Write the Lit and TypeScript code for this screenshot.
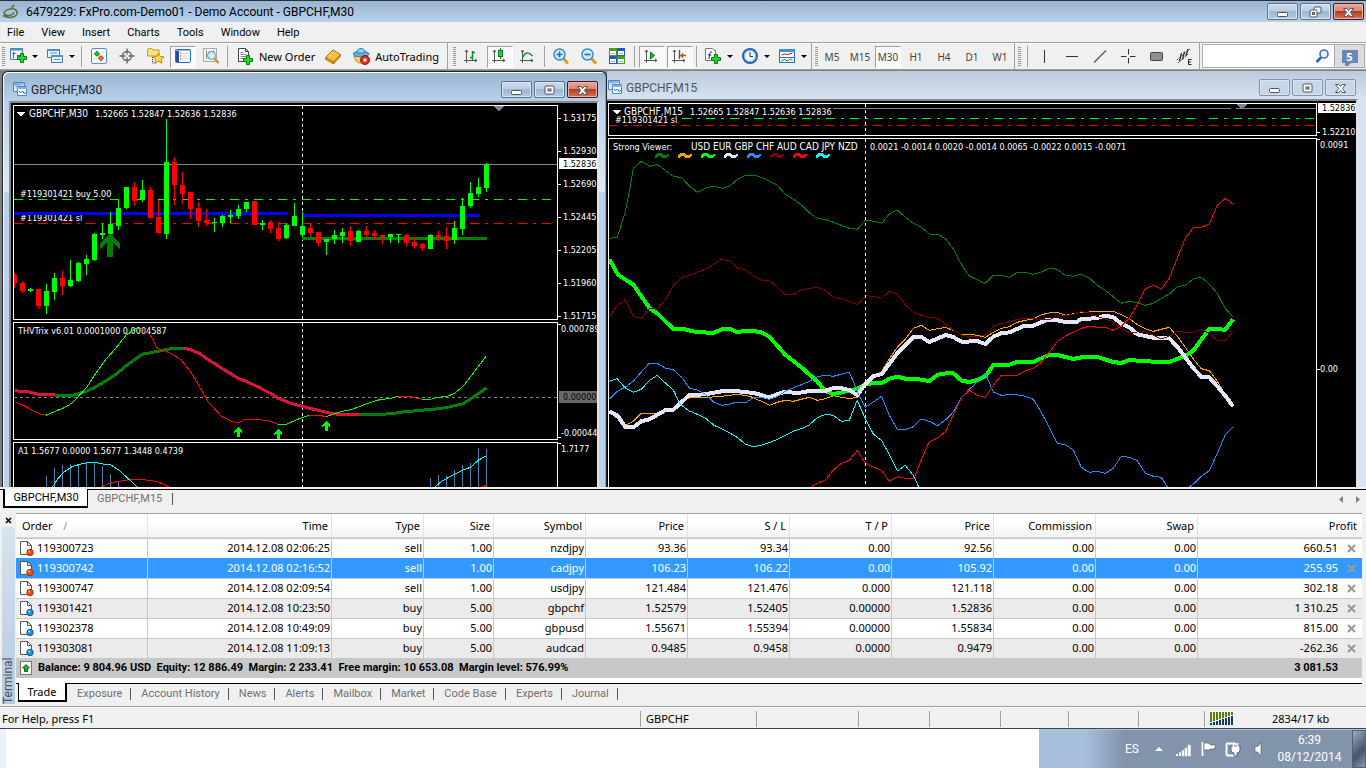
import { LitElement, html, css, svg } from "lit";
import { customElement, property } from "lit/decorators.js";
import { classMap } from "lit/directives/class-map.js";

/* ---------- icons ---------- */

const plus = (x: number, y: number) => svg`
  <path d="M${x + 3.5} ${y + 0.5}h3v3h3v3h-3v3h-3v-3h-3v-3h3z" fill="#19e01f" stroke="#047a10"/>`;

const icons: Record<string, unknown> = {
  logo: svg`<path d="M1 12.500q5 3 10 1.500t4-5.500q-2-3.500-7-2.500t-6 4q1 3 5 2.500t5-3" fill="none" stroke="#5f7040" stroke-width="1.600"/><path d="M9 5q0-3 4-3.500-.5 3-4 3.500z" fill="#5f7040"/>`,
  chart: svg`<path d="M1.500 1.500h11v4M1.500 1.500v9h4" fill="#dfeefb" stroke="#4a86c8"/><path d="M1 3h11" stroke="#4a86c8"/><path d="M5.500 5.500h9v9h-9z" fill="#fff" stroke="#4a86c8"/><path d="M5 7h10" stroke="#7fb2e5" stroke-width="2"/><path d="M7 10l1.500 2 2-2 2 3 1-2" fill="none" stroke="#2f6fb7"/>`,
  newchart: svg`<path d="M.5.500h12v11H.500z" fill="#eef6fd" stroke="#4480ba"/><path d="M0 1.500h13" stroke="#4a90d8" stroke-width="2"/><path d="M3.500 4v6M2.500 5.500h3M7 7.500h4" stroke="#557"/>${plus(7, 5)}`,
  profiles: svg`<path d="M.5 1.500h12v8H.500z" fill="#e6f2fc" stroke="#3f78ae"/><path d="M0 2h13" stroke="#4a90d8" stroke-width="2"/><path d="M4.500 7.500h11v7h-11z" fill="#e6f2fc" stroke="#3f78ae"/><path d="M4 8h12" stroke="#4a90d8" stroke-width="2"/><path d="M3 5h7M7 11.500h6" stroke="#6a90b5"/>`,
  market: svg`<rect x=".5" y=".5" width="15" height="15" rx="1.500" fill="#fff" stroke="#4a90d8"/><path d="M6 3l3 3.200H7.200V8H4.800V6.200H3z" fill="#1fbf2f" stroke="#067a12" stroke-width=".7"/><path d="M10 13l3-3.200h-1.800V8H8.800v1.800H7z" fill="#ff6a3a" stroke="#c02a05" stroke-width=".7"/><path d="M10 4h3M3 11h3" stroke="#bcd"/>`,
  cross: svg`<circle cx="8" cy="8" r="4.500" fill="none" stroke="#666" stroke-width="1.400"/><path d="M8 .5v6M8 9.500v6M.5 8h6M9.500 8h6" stroke="#666" stroke-width="1.400"/>`,
  folder: svg`<path d="M.5 2.500q0-2 2-2h2l1.500 1.500h6v6h-11.500z" fill="#fbe27a" stroke="#c79b1e"/><path d="M5.500 9v6h3" stroke="#333" stroke-dasharray="1 1" fill="none"/><path d="M11.500 5l1.700 3.500 3.800.4-2.900 2.500.9 3.800-3.500-2-3.500 2 .9-3.800-2.900-2.500 3.800-.4z" fill="#ffdc4a" stroke="#b98a10"/>`,
  navigator: svg`<rect x=".5" y="1.500" width="15" height="13" rx="1" fill="#fff" stroke="#2e6fb3"/><path d="M2.500 3v11" stroke="#1e4fa0" stroke-width="3"/><path d="M.5 2h15" stroke="#2e6fb3"/><path d="M6 5.500h8M6 8h8M6 10.500h8" stroke="#cdd9ea"/><path d="M5 5h1M5 8h1M5 11h1" stroke="#d33"/>`,
  tester: svg`<rect x=".5" y=".5" width="13" height="13" fill="#f6f6f6" stroke="#a9a9a9"/><path d="M3.500 2v9M6.500 3v8M10.500 2v3" stroke="#888"/><circle cx="8.500" cy="7.500" r="4" fill="#d5ecfa" fill-opacity=".85" stroke="#5b93c4"/><path d="M11.500 10.500l4 4.500" stroke="#c9962c" stroke-width="2.400"/>`,
  order: svg`<path d="M1.500.5h7l3 3v10h-10z" fill="#fff" stroke="#444"/><path d="M8.500.5v3h3" fill="none" stroke="#444"/><path d="M3.500 4.500h3M3.500 6.500h6M3.500 8.500h6M3.500 10.500h4" stroke="#888"/>${plus(6, 7)}`,
  book: svg`<path d="M.5 9.500L8 2l7.500 4.500-7 7.500z" fill="#f5bf3c" stroke="#a9720c"/><path d="M.5 9.500v2l8 4.500v-2zM8.500 16l7-7.500v-2l-7 7.500z" fill="#d89820" stroke="#a9720c" stroke-width=".7"/><path d="M4 8.500l4.500-4.500" stroke="#ffe69a"/>`,
  auto: svg`<path d="M1 8q2 8 9 7l4-7z" fill="#ffd65c" stroke="#b8860b"/><ellipse cx="8" cy="6" rx="8" ry="2.800" fill="#58b6ea" stroke="#2c7fb5"/><path d="M4 5q0-4.500 4-4.500t4 4.500z" fill="#8fd3f7" stroke="#2c7fb5"/><circle cx="12" cy="12" r="4.500" fill="#e0261b" stroke="#9d120b"/><rect x="10.500" y="10.500" width="3" height="3" fill="#fff"/>`,
  bars: svg`<path d="M3.500 2v13M1 12.500h13" stroke="#555"/><path d="M2 4l1.500-2L5 4M12 11l2 1.500-2 1.500" stroke="#555" fill="none"/><path d="M9.500 3v9M7 9.500h2.500M9.500 4.500H12" stroke="#0a8a1e" stroke-width="1.400"/>`,
  candles: svg`<path d="M3.500 2v13M1 12.500h13" stroke="#555"/><path d="M2 4l1.500-2L5 4M12 11l2 1.500-2 1.500" stroke="#555" fill="none"/><path d="M9.500 0v11" stroke="#0a7a1a"/><rect x="7.500" y="2.500" width="4" height="6" fill="#25d23a" stroke="#0a7a1a"/>`,
  line: svg`<path d="M3.500 2v13M1 12.500h13" stroke="#555"/><path d="M2 4l1.500-2L5 4M12 11l2 1.500-2 1.500" stroke="#555" fill="none"/><path d="M3.500 10Q7 1 13.500 8" fill="none" stroke="#0a8a1e" stroke-width="1.300"/>`,
  zoomin: svg`<path d="M10 10l5 5.500" stroke="#d4a017" stroke-width="3"/><circle cx="6.500" cy="6.500" r="5.500" fill="#cfeafc" stroke="#3a86c6" stroke-width="1.400"/><path d="M3.500 6.500h6M6.500 3.500v6" stroke="#2470b0" stroke-width="1.600"/>`,
  zoomout: svg`<path d="M10 10l5 5.500" stroke="#d4a017" stroke-width="3"/><circle cx="6.500" cy="6.500" r="5.500" fill="#cfeafc" stroke="#3a86c6" stroke-width="1.400"/><path d="M3.500 6.500h6" stroke="#2470b0" stroke-width="1.600"/>`,
  tile: svg`<path d="M0 0h8v8H0zM8 8h8v8H8z" fill="#4b9c1f"/><path d="M8 0h8v8H8zM0 8h8v8H0z" fill="#2459c8"/><path d="M1 3h6v4H1zM9 3h6v4H9zM1 11h6v4H1zM9 11h6v4H9z" fill="#fff"/><path d="M2 5.500h4M10 5.500h4M2 13.500h4M10 13.500h4" stroke="#9bc"/>`,
  scroll: svg`<path d="M3.500 2v13M1 12.500h13" stroke="#555"/><path d="M2 4l1.500-2L5 4M12 11l2 1.500-2 1.500" stroke="#555" fill="none"/><path d="M7.500 4l4 3.500-4 3.500z" fill="#22b833" stroke="#0a7a1a"/>`,
  shift: svg`<path d="M3.500 2v13M1 12.500h13" stroke="#555"/><path d="M2 4l1.500-2L5 4M12 11l2 1.500-2 1.500" stroke="#555" fill="none"/><path d="M8.500 2v9" stroke="#1560a8" stroke-width="1.400"/><path d="M10 7.500h5M12 5.500l-2 2 2 2" fill="none" stroke="#d0441a" stroke-width="1.400"/>`,
  indicator: svg`<path d="M2.500 2.500h8v10h-8z" fill="#ddd" stroke="#777"/><path d="M.5.500h7l3 3v9H.500z" fill="#fff" stroke="#777"/><path d="M7 4q-2-.5-2.200 1.500L4 11M3 7h3.500" fill="none" stroke="#333"/>${plus(6, 6)}`,
  clock: svg`<circle cx="8" cy="8" r="7" fill="#f3f9ff" stroke="#1f62b8" stroke-width="2"/><circle cx="8" cy="8" r="5.500" fill="none" stroke="#79b5ef"/><path d="M8 4v4.500h3" fill="none" stroke="#333"/>`,
  template: svg`<rect x=".5" y="1.500" width="15" height="13" fill="#fff" stroke="#2e6fb3"/><path d="M0 2.500h16" stroke="#3f8edb" stroke-width="3"/><path d="M1 9.500h14" stroke="#2e6fb3"/><path d="M2.500 7l3-1 3 .5 5-1.500" fill="none" stroke="#a02010"/><path d="M2.500 13l3-1.500 3 1.500 3-2 2 1.500" fill="none" stroke="#0a8a1e"/>`,
  vline: svg`<path d="M8.500 2v13" stroke="#333"/>`,
  hline: svg`<path d="M2 8.500h12" stroke="#333"/>`,
  trend: svg`<path d="M2 14.500L14 2.500" stroke="#555" stroke-width="1.300"/>`,
  crossline: svg`<path d="M8.500 1v5.500M8.500 10v5.500M1 8.500h5.500M10 8.500h5.500" stroke="#333"/>`,
  rect: svg`<rect x="2.500" y="4.500" width="12" height="8" rx="1" fill="#8f8f8f" stroke="#444"/>`,
  channel: svg`<path d="M1 12L14 1M2 15l10-9" stroke="#333" stroke-dasharray="2 1"/><path d="M5.500 5l-2 8M8.500 3.500l-2 8M12 1l-2 7" stroke="#333" stroke-width="1.300"/><path d="M15.500 11.500h-3v5h3M12.500 14h2.500" stroke="#222" fill="none"/>`,
  search: svg`<path d="M7 9.500L2.500 14" stroke="#2f5fc4" stroke-width="2.600"/><circle cx="10" cy="6" r="4" fill="#e9f2fd" stroke="#3b6fd0" stroke-width="1.600"/>`,
  min: svg`<rect x="3.500" y="8.500" width="10" height="4" rx="1" fill="#fff" stroke="#4a5566"/>`,
  max: svg`<rect x="4" y="4" width="9" height="8" rx="1" fill="#fff" stroke="#4a5566"/><rect x="7" y="7" width="3" height="2" fill="#b8c8dc" stroke="#4a5566"/>`,
  restore: svg`<rect x="7" y="3" width="7" height="6" rx="1" fill="#fff" stroke="#4a5566"/><rect x="3" y="6" width="7" height="7" rx="1" fill="#fff" stroke="#4a5566"/><rect x="5.500" y="8.500" width="2" height="2" fill="#b8c8dc" stroke="#4a5566"/>`,
  close: svg`<path d="M3.500 4.500h3.200l1.800 2 1.800-2h3.200l-3.200 4 3.200 4h-3.200l-1.800-2-1.800 2H3.500l3.200-4z" fill="#fff" stroke="#4a5566"/>`,
  sell: svg`<path d="M2.500 1.500h7l4 4v9h-11z" fill="#fff" stroke="#555"/><path d="M9.500 1.500v4h4" fill="none" stroke="#555"/><circle cx="12" cy="12.500" r="3.200" fill="#ee4b1c" stroke="#a82c08"/><circle cx="11.200" cy="11.500" r="1" fill="#ffb79f"/>`,
  buy: svg`<path d="M2.500 1.500h7l4 4v9h-11z" fill="#fff" stroke="#555"/><path d="M9.500 1.500v4h4" fill="none" stroke="#555"/><circle cx="12" cy="12.500" r="3.200" fill="#1d95dd" stroke="#0a5c96"/><circle cx="11.200" cy="11.500" r="1" fill="#a6dcff"/>`,
  balance: svg`<rect x="2.500" y="1.500" width="11" height="13" fill="#fff" stroke="#777"/><path d="M8 4.500l3.500 3.500h-2v3.500h-3V8h-2z" fill="#25b22c" stroke="#0c6a12"/>`,
  cross8: svg`<path d="M5 5l7 7M12 5l-7 7" stroke="#9a9a9a" stroke-width="2.200"/>`,
  signal: svg`<path d="M1 13h2v2H1zM4 11.500h2V15H4z" fill="#fff"/><path d="M7 9.500h2V15H7zM10 7h2v8h-2zM13 4h2.500v11H13z" fill="#fff" stroke="#e4ebf2" stroke-width=".5"/>`,
  flag: svg`<path d="M2.500 1v14" stroke="#fff" stroke-width="1.800"/><path d="M4 2h5l1.500 2H16l-2 4h-3.500L9 9H4z" fill="#fff" stroke="#3d4d60" stroke-width=".6"/>`,
  plug: svg`<rect x="1.500" y="2.500" width="9" height="12" rx="1" fill="none" stroke="#fff" stroke-width="1.800"/><path d="M6 5h9v4q0 3-3 3v3H9v-3Q6 12 6 9z" fill="#fff" stroke="#3d4d60" stroke-width=".8"/><path d="M8.500 2v4M12.500 2v4" stroke="#fff" stroke-width="1.600"/>`,
  speaker: svg`<path d="M5 5.500h2.500L11 2v13L7.500 11H5z" fill="#fff" stroke="#3d4d60" stroke-width=".6"/>`,
};

const icon = (name: string) =>
  html`<svg class="ico" width="17" height="17" viewBox="0 0 17 17" aria-hidden="true">${icons[name]}</svg>`;

/* ---------- chart data ---------- */

type Candle = [string, number, number, number, number];
const G = "#00ff00";
const R = "#ff0000";

/* colour, high, body top, body bottom, low: in thirds of a pixel below y = 98 */
const candles: Candle[] = [
  [R, 525, 531, 555, 570], [R, 549, 555, 579, 585], [G, 570, 573, 579, 582], [R, 573, 573, 624, 633],
  [G, 558, 579, 624, 648], [G, 525, 540, 582, 606], [R, 519, 540, 564, 591], [G, 486, 546, 564, 567],
  [G, 492, 495, 549, 552], [G, 471, 483, 498, 531], [G, 405, 408, 486, 489], [G, 375, 405, 411, 423],
  [G, 342, 378, 408, 408], [G, 306, 330, 384, 396], [G, 267, 267, 330, 333], [R, 252, 267, 309, 324],
  [G, 246, 276, 306, 312], [R, 267, 276, 360, 360], [R, 306, 357, 405, 405], [G, 63, 192, 408, 423],
  [R, 177, 192, 261, 321], [R, 222, 261, 288, 318], [R, 282, 282, 333, 363], [R, 312, 330, 369, 387],
  [R, 333, 366, 375, 384], [G, 360, 372, 375, 402], [G, 351, 354, 375, 387], [G, 336, 351, 357, 375],
  [G, 321, 333, 354, 363], [G, 312, 312, 333, 342], [R, 309, 309, 381, 381], [G, 366, 375, 381, 396],
  [R, 366, 372, 393, 405], [R, 372, 390, 423, 429], [G, 375, 381, 420, 423], [G, 315, 354, 384, 384],
  [G, 342, 384, 411, 417], [R, 375, 390, 405, 417], [R, 402, 402, 435, 444], [G, 423, 423, 432, 471],
  [G, 396, 411, 423, 438], [G, 390, 402, 414, 435], [R, 384, 399, 429, 444], [G, 396, 399, 432, 432],
  [R, 384, 399, 411, 417], [R, 396, 405, 414, 426], [R, 411, 411, 417, 438], [G, 408, 408, 417, 435],
  [G, 408, 408, 411, 435], [R, 408, 411, 435, 444], [R, 417, 432, 444, 450], [R, 435, 438, 450, 459],
  [G, 408, 411, 453, 453], [R, 399, 411, 417, 429], [R, 387, 414, 429, 453], [G, 369, 390, 426, 438],
  [G, 300, 324, 393, 411], [G, 252, 285, 324, 330], [G, 240, 267, 288, 297], [G, 195, 198, 270, 282],
];

type Series = [string, number, string];

const trix: Series[] = [
  ["#dc143c", 3, "38,218 75,222 103,230 142,231"],
  ["#008000", 3, "142,231 190,231 222,220 245,207 270,190 300,167 330,138 365,109 405,100 430,94 455,90 470,90"],
  ["#dc143c", 3, "470,90 490,95 512,106 530,121 570,151 612,181 635,191 665,208 700,229 715,241 750,257 800,272 850,286 880,290 924,291"],
  ["#008000", 3, "924,291 960,290 1005,287 1040,281 1090,276 1110,275 1150,268 1190,257 1213,240 1250,210"],
  [R, 1, "38,250 70,268 100,287 118,292"],
  [G, 1, "118,292 140,281 165,269 185,255 200,237 222,209 245,168 270,127 300,87 325,50 340,38 350,31 362,33"],
  [R, 1, "362,33 375,39 388,55 405,92 425,99 440,107 465,125 490,162 512,205 535,252 570,296 600,312 612,314 632,304 665,305 690,308 715,319"],
  [G, 1, "715,319 738,318 755,309 775,299 795,292"],
  [R, 1, "795,292 825,293 838,296"],
  [G, 1, "838,296 855,289 880,280 905,274 940,258 975,245 1005,241 1022,235"],
  [R, 1, "1022,235 1055,236 1085,244"],
  [G, 1, "1085,244 1110,243 1125,238 1150,235 1168,226 1190,205 1213,170 1250,113"],
];

const a1: Series[] = [
  [R, 1, "260,507 280,497 300,491 330,485 345,484 375,486 405,491 420,499 433,507"],
  [R, 1, "1240,507 1250,501"],
  ["#00ffff", 1, "135,507 150,480 165,462 185,446 205,439 225,434 243,433 260,437 285,441 305,456 325,477 340,493 352,507"],
  ["#00ffff", 1, "1118,507 1135,490 1170,467 1190,456 1209,448 1230,426 1250,413"],
];

const a1Bars: [number, number][] = [
  [46, 476], [54, 468], [62, 465], [70, 464], [78, 464], [86, 463], [94, 463], [102, 466], [110, 474], [118, 481],
  [430, 478], [438, 475], [446, 476], [454, 470], [462, 465], [470, 463], [478, 448], [486, 449],
];

const strength: Series[] = [
  ["#008000", 1, "28,421 52,418 76,342 90,270 100,211 124,190 150,205 172,199 196,217 220,235 245,239 268,264 292,283 316,271 342,264 365,271 390,264 414,243 436,232 465,232 484,238 508,249 532,262 556,289 580,303 604,321 628,345 652,361 680,365 700,373 724,382 748,391 772,394 796,367 825,370 845,376 868,348 892,336 916,358 940,376 964,388 988,408 1013,409 1037,423 1060,453 1085,501 1108,534 1133,546 1156,556 1180,532 1204,532 1228,538 1252,523 1276,523 1300,529 1324,522 1348,511 1372,514 1396,532 1420,535 1444,528 1468,540 1492,562 1516,577 1540,596 1564,616 1588,610 1612,614 1636,622 1660,616 1684,601 1708,588 1732,566 1756,562 1780,542 1804,538 1828,558 1852,586 1876,632 1899,657"],
  ["#ffa500", 1, "28,940 76,983 100,970 124,946 172,946 196,938 220,936 268,898 325,898 365,895 414,889 450,895 484,910 508,922 532,913 556,907 580,910 628,898 652,907 676,902 700,893 748,902 772,898 796,860 820,838 845,820 868,783 892,748 916,723 940,691 964,682 988,697 1037,688 1060,698 1085,710 1108,709 1133,712 1156,718 1180,703 1204,691 1228,686 1252,673 1276,667 1300,663 1324,650 1348,645 1372,643 1396,652 1430,645 1468,642 1492,640 1540,640 1564,650 1588,662 1612,680 1636,692 1660,700 1684,694 1708,688 1732,715 1756,748 1780,783 1804,812 1828,818 1852,850 1876,890 1899,925"],
  [G, 4, "28,484 54,530 100,560 150,632 172,646 220,693 250,693 292,703 342,704 365,694 390,693 408,701 460,699 484,703 508,716 556,770 604,808 652,850 676,880 700,888 720,884 772,872 796,860 820,855 845,855 868,842 892,836 916,842 950,843 988,849 1013,830 1050,824 1060,826 1085,848 1108,852 1133,846 1156,835 1180,802 1228,800 1252,792 1300,792 1348,770 1372,771 1420,783 1444,778 1492,777 1540,792 1564,795 1588,786 1660,791 1708,792 1756,773 1780,758 1828,692 1876,695 1899,664"],
  ["#e6e6fa", 4, "28,940 52,952 76,987 100,988 124,970 148,964 196,937 220,935 268,891 316,889 370,879 414,880 460,885 484,891 508,899 532,888 550,883 600,884 628,879 676,879 700,870 724,871 748,876 772,891 796,858 820,835 845,828 892,766 940,717 964,717 988,732 1037,711 1060,717 1085,731 1133,730 1156,738 1180,716 1204,706 1228,703 1270,685 1300,683 1340,666 1372,667 1396,672 1430,671 1444,664 1492,660 1516,653 1540,658 1564,677 1588,688 1612,709 1660,719 1708,721 1732,746 1780,810 1804,836 1828,838 1852,865 1876,893 1899,925"],
  ["#1e90ff", 1, "28,904 52,880 76,867 100,850 124,822 148,796 172,796 196,810 220,815 245,838 268,870 292,876 316,889 342,913 365,922 390,918 408,913 436,915 460,899 484,898 508,904 532,896 556,880 580,869 604,860 628,850 652,836 676,832 700,835 724,829 748,822 772,880 796,928 820,912 845,895 868,952 892,994 916,995 940,986 964,963 988,970 1013,983 1037,965 1060,942 1085,898 1108,874 1133,850 1156,826 1180,882 1204,892 1240,889 1276,895 1300,904 1324,943 1348,988 1372,1036 1396,1040 1420,1056 1444,1108 1468,1123 1492,1120 1516,1126 1540,1111 1564,1075 1588,1078 1612,1088 1636,1126 1660,1135 1684,1138 1704,1170"],
  ["#1e90ff", 1, "1764,1170 1780,1158 1804,1135 1828,1118 1852,1066 1876,1010 1899,988"],
  ["#800000", 1, "28,657 52,622 76,604 100,655 124,661 148,632 172,632 200,600 220,562 245,538 268,532 292,523 316,514 342,498 365,484 390,490 414,511 436,515 460,534 484,547 508,547 532,568 556,590 580,590 604,576 628,571 652,568 676,577 700,598 724,602 748,610 772,620 796,592 820,596 845,601 868,580 892,589 916,620 940,643 964,652 988,658 1013,661 1037,679 1060,697 1085,711 1108,716 1133,715 1156,712 1180,685 1204,676 1228,673 1252,664 1276,661 1300,662 1324,664 1348,666 1372,654 1396,653 1420,649 1444,641 1468,645 1492,655 1516,663 1540,672 1564,694 1588,703 1612,702 1636,701 1660,712 1684,723 1708,714 1732,700 1756,703 1780,703 1804,695 1828,706 1852,727 1876,727 1899,698"],
  [R, 1, "636,1165 652,1156 676,1146 700,1116 724,1096 748,1087 772,1057 796,1096 820,1107 845,1118 868,1150 892,1136 916,1141 942,1141 964,1085 988,1031 1013,1020 1037,1000 1060,950 1085,898 1108,877 1133,892 1156,898 1180,862 1204,832 1252,832 1276,818 1300,811 1324,793 1348,762 1372,730 1396,714 1420,703 1444,691 1468,685 1492,688 1516,688 1540,697 1564,685 1588,660 1612,620 1636,572 1660,562 1684,574 1708,540 1732,480 1756,420 1780,388 1804,388 1828,378 1852,322 1876,301 1899,318"],
  ["#00ffff", 1, "28,850 52,842 76,870 100,883 124,874 148,848 172,832 196,855 220,876 240,918 268,939 292,949 316,960 342,982 365,992 390,1005 414,1020 436,1038 460,1046 484,1042 508,1034 532,1024 556,1012 580,1000 604,992 628,980 652,959 676,949 700,952 724,970 748,967 772,906 796,963 820,1008 845,1028 868,1069 892,1119 916,1102 940,1132 956,1167"],
];

const lines = (list: Series[], x0: number, y0: number, sx: number, sy: number) =>
  list.map(([color, width, data]) => {
    const points = data
      .split(" ")
      .map((p) => p.split(",").map(Number))
      .map(([x, y]) => `${(x0 + x / sx).toFixed(1)},${(y0 + y / sy).toFixed(1)}`)
      .join(" ");
    return svg`<polyline points=${points} fill="none" stroke=${color} stroke-width=${width} stroke-linejoin="round"/>`;
  });

const upArrow = (x: number, y: number) => svg`
  <path d="M${x} ${y}l4 4v2.500l-2.500-2v5h-3v-5l-2.500 2V${y + 4}z" fill=${G}/>`;

const frame = (x: number, y: number, content: unknown) => html`
  <svg class="canvas"><g transform="translate(${-x} ${-y})">${content}</g></svg>`;

const tick = (x: number, y: number) => svg`<path d="M${x} ${y + 0.5}h3" stroke="#fff"/>`;

const pricePlot = frame(14, 106, svg`
  <path d="M14 164.500H557" stroke="#778899"/>
  <path d="M14 199.500H551" stroke=${G} stroke-dasharray="9 6 3 6"/>
  <path d="M14 223.500H551" stroke=${R} stroke-dasharray="9 6 3 6"/>
  <text x="20" y="221">#119301421 sl</text>
  <path d="M14 213.500H287M303 215.500H479" stroke="#0000ff" stroke-width="3"/>
  <path d="M302.500 106V319" stroke="#fff" stroke-dasharray="3 3"/>
  <path d="M302 238.500H487" stroke="#008000" stroke-width="3"/>
  ${candles.map(([c, h, t, b, l], i) => {
    const x = 14 + 8 * i;
    const y = (v: number) => Math.round(98 + v / 3);
    return svg`<path d="M${x} ${y(h)}h1V${y(l)}h-1zM${x - 2} ${y(t)}h5V${Math.max(y(b), y(t) + 1)}h-5z" fill=${c}/>`;
  })}
  <path d="M110 234l10 9v6l-7-6v14h-6v-14l-7 6v-6z" fill="#008000"/>
  <text x="20" y="197">#119301421 buy 5.00</text>
  <path d="M493 106h11l-5.500 5.500z" fill="#778899"/>
  <path d="M16 112h9l-4.500 4.500z" fill="#fff"/>
  <text class="name" x="29" y="117">GBPCHF,M30</text>
  <text x="95" y="117">1.52665 1.52847 1.52636 1.52836</text>`);

const priceAxis = frame(558, 105, svg`
  ${["1.53175", "1.52930", "1.52690", "1.52445", "1.52205", "1.51960", "1.51715"].map((t, i) => svg`
    ${tick(558, 118 + i * 33)}<text x="563" y=${121 + i * 33}>${t}</text>`)}
  <rect x="559" y="158" width="38" height="11" fill="#fff"/>
  <text class="dark" x="563" y="167">1.52836</text>`);

const trixPlot = frame(14, 323, svg`
  <text x="18" y="334">THVTrix v6.01 0.0001000 0.0004587</text>
  <path d="M14 397.500H557" stroke="#808080" stroke-dasharray="3 3"/>
  <path d="M302.500 323V439" stroke="#fff" stroke-dasharray="3 3"/>
  ${lines(trix, 0, 318, 2.57, 3)}
  ${upArrow(238, 427)}${upArrow(278, 429)}${upArrow(326, 421)}`);

const trixAxis = frame(558, 322, svg`
  ${tick(558, 324)}<text x="561" y="332">0.000789</text>
  <rect x="559" y="391" width="38" height="12" fill="#696969"/>
  <text class="dark" x="563" y="400">0.00000</text>
  ${tick(558, 437)}<text x="561" y="436">-0.00044</text>`);

const a1Plot = frame(14, 443, svg`
  <text x="18" y="454">A1 1.5677 0.0000 1.5677 1.3448 0.4739</text>
  <path d="M302.500 443V490" stroke="#fff" stroke-dasharray="3 3"/>
  ${a1Bars.map(([x, y]) => svg`<path d="M${x + 0.5} ${y}V490" stroke="#4682b4"/>`)}
  ${lines(a1, 0, 318, 2.57, 3)}`);

const a1Axis = frame(558, 442, svg`${tick(558, 443)}<text x="561" y="452">1.7177</text>`);

const m15Price = frame(609, 104, svg`
  <path d="M832 108.500H1231M1236 108.500H2400" stroke="#778899"/>
  <path d="M682 118.500H1195M1209 118.500H2400" stroke=${G} stroke-dasharray="9 6 3 6"/>
  <path d="M609 125.500H2400" stroke=${R} stroke-dasharray="9 6 3 6"/>
  <path d="M865.500 104V136" stroke="#fff" stroke-dasharray="3 3"/>
  <text x="615" y="123">#119301421 sl</text>
  <rect x="622" y="106" width="211" height="10" fill="#000"/>
  <path d="M612 110h9l-4.500 4.500z" fill="#fff"/>
  <text class="name" x="624" y="115">GBPCHF,M15</text>
  <text x="690" y="115">1.52665 1.52847 1.52636 1.52836</text>
  <path d="M1236 104h11l-5.500 5.500z" fill="#778899"/>`);

const m15PriceAxis = frame(1317, 103, svg`
  <rect x="1318" y="102" width="39" height="11" fill="#fff"/>
  <text class="dark" x="1322" y="111">1.52836</text>
  ${tick(1317, 132)}<text x="1322" y="135">1.52210</text>`);

const legend = ["#008000", "#ffa500", G, "#e6e6fa", "#1e90ff", "#800000", R, "#00ffff"];

const strengthPlot = frame(609, 139, svg`
  ${lines(strength, 600, 98, 3, 3)}
  <path d="M865.500 139V490" stroke="#fff" stroke-dasharray="3 3"/>
  <text x="613" y="150">Strong Viewer:</text>
  <text class="name" x="691" y="150">USD EUR GBP CHF AUD CAD JPY NZD</text>
  <text x="870" y="150">0.0021 -0.0014 0.0020 -0.0014 0.0065 -0.0022 0.0015 -0.0071</text>
  ${legend.map((c, i) => {
    const x = 655 + i * 23;
    return svg`<path d="M${x} 158v-3l2-2h4l3 2h2l1.500-1.500H${x + 14}v2l-2 2.500h-4l-3-2h-2l-1.500 2z" fill=${c}/>`;
  })}`);

const strengthAxis = frame(1317, 138, svg`
  ${tick(1317, 139)}<text x="1320" y="148">0.0091</text>
  ${tick(1317, 369)}<text x="1320" y="372">0.00</text>`);

/* ---------- shared styles ---------- */

const base = css`
  :host, * { box-sizing: border-box; }
  button, input { font: inherit; color: inherit; margin: 0; padding: 0; border: 0; background: none; }
  button { cursor: default; white-space: nowrap; }
  .ico { display: block; flex: none; }
`;

@customElement("caption-buttons")
class CaptionButtons extends LitElement {
  @property({ type: Boolean }) active = false;
  @property({ type: Boolean }) restore = false;
  static styles = [base, css`
    :host { display: flex; gap: 2px; }
    button {
      width: 31px; height: 17px; display: grid; place-items: center; border: 1px solid #5c708c; border-radius: 2px;
      background: linear-gradient(#cfdcec, #bccde1 48%, #9fb6d1 50%, #b6cce4); box-shadow: inset 0 0 0 1px #d9e6f4;
    }
    button.red { border-color: #4c1420; background: linear-gradient(#e6a79c, #d88575 48%, #b83a20 50%, #d47a5c); box-shadow: inset 0 0 0 1px #eab5a8; }
    button.idle { border-color: #8493aa; background: #c8d7e6; box-shadow: inset 0 0 0 1px #d8e4f0; }
  `];
  render() {
    const idle = { idle: !this.active };
    return html`
      <button class=${classMap(idle)} aria-label="Minimize">${icon("min")}</button>
      <button class=${classMap(idle)} aria-label="Maximize">${icon(this.restore ? "restore" : "max")}</button>
      <button class=${classMap({ ...idle, red: this.active })} aria-label="Close">${icon("close")}</button>`;
  }
}

@customElement("chart-window")
class ChartWindow extends LitElement {
  @property() name = "";
  @property({ type: Boolean, reflect: true }) active = false;
  @property({ attribute: false }) panels: { plot: unknown; axis: unknown; size: string }[] = [];
  static styles = [base, css`
    :host {
      display: flex; flex-direction: column; min-width: 0; min-height: 0; overflow: hidden; padding-right: 8px; color: #4d5560;
      background: linear-gradient(#bccada, #d6e3f1 28px, #d9e5f3);
    }
    :host([active]) {
      padding: 0 7px 0 6px; border: 1px solid #222; border-bottom: 0; border-radius: 6px 6px 0 0; color: #1c2430;
      background: linear-gradient(#99b4d1, #b9d1ea 30px, #dde9f5 119px, #b9d1ea 121px);
      box-shadow: inset 1px 1px #fff, inset -1px 0 #37c3e8;
    }
    .bar { flex: none; height: 28px; display: flex; align-items: center; gap: 2px; padding: 5px 2px 0 0; font: 12px Roboto, "Noto Sans", sans-serif; }
    :host([active]) .bar { height: 29px; padding: 6px 1px 0 3px; }
    .title { flex: 1; }
    .body { flex: 1; min-height: 0; display: flex; flex-direction: column; gap: 2px; background: #000;
      border: solid; border-width: 2px 2px 0 0; border-color: #85888c #e3e3e3; padding: 2px 0 0 1px; }
    :host([active]) .body { border-left: 2px solid #85888c; padding-left: 2px; }
    .panel { display: flex; min-height: 0; }
    .price { flex: 0 0 215px; } .trix { flex: 0 0 118px; } .strip { flex: 0 0 33px; } .fill { flex: 1; }
    .plot { flex: 1; min-width: 0; border: 1px solid #fff; overflow: hidden; }
    .fill .plot { border-bottom: 0; }
    .axis { flex: 0 0 39px; overflow: hidden; }
    .canvas { display: block; width: 100%; height: 100%; shape-rendering: crispEdges; }
    .canvas text { font: 9px "DejaVu Sans Condensed", "Noto Sans", sans-serif; fill: #fff; white-space: pre; }
    .canvas text.name { font-size: 10px; }
    .canvas text.dark { fill: #000; }
  `];
  render() {
    return html`
      <div class="bar">${icon("chart")}<span class="title">${this.name}</span>
        <caption-buttons ?active=${this.active}></caption-buttons></div>
      <div class="body">
        ${this.panels.map((p) => html`<div class="panel ${p.size}">
          <div class="plot">${p.plot}</div><div class="axis">${p.axis}</div></div>`)}
      </div>`;
  }
}

@customElement("tool-bar")
class ToolBar extends LitElement {
  static styles = [base, css`
    :host { display: flex; height: 28px; background: #f0f0f0; border-top: 1px solid #a0a0a0; border-bottom: 1px solid #a0a0a0; box-shadow: inset 0 1px #fff; font-size: 11px; }
    .group { display: flex; align-items: center; padding-top: 1px; border-right: 1px solid #a0a0a0; }
    .group + .group { padding-left: 2px; }
    .grip { width: 3px; height: 19px; margin: 0 0 0 1px; background: repeating-linear-gradient(#999 0 1px, #f0f0f0 1px 2px); }
    .group.first { padding-left: 1px; padding-right: 4px; }
    .group.charts { padding-left: 4px; }
    .charts .grip { margin-right: 2px; }
    .b { width: 28px; height: 24px; display: flex; align-items: center; justify-content: center; flex: none; }
    .wide { width: auto; padding: 0 4px 0 6px; gap: 5px; }
    .drop { width: 37px; justify-content: flex-start; padding-left: 5px; gap: 5px; }
    .drop::after { content: ""; border: 3px solid transparent; border-top-color: #000; border-bottom: 0; }
    .on { width: 26px; height: 22px; margin: 0 1px; border: 1px solid #a0a0a0; border-right-color: #fff; border-bottom-color: #fff; background: #f9f9f9; }
    .tf { color: #444; font-size: 10px; }
    .sep { width: 1px; height: 21px; background: #a0a0a0; margin: 0 3px 0 2px; }
    .sep.gap { margin: 0 3px 0 6px; }
    .find { flex: 1; min-width: 120px; display: flex; margin: 1px 1px 1px 2px; border: 1px solid #adadad; background: #fff; align-items: center; }
    .find input { flex: 1; min-width: 0; height: 100%; outline: none; padding-left: 4px; }
    .chat { width: 30px; align-self: stretch; margin-left: 3px; display: grid; place-items: center; border-left: 1px solid #adadad; background: #dcdcdc; }
    .bubble { position: relative; width: 16px; height: 13px; background: #6a86b8; color: #fff; font: bold 11px/13px "Noto Sans", sans-serif; text-align: center; }
    .bubble::after { content: ""; position: absolute; left: 3px; top: 13px; border: 3px solid transparent; border-top-color: #6a86b8; border-left-color: #6a86b8; border-bottom-width: 0; }
  `];
  private b(name: string, label: string, cls = "") {
    return html`<button class="b ${cls}" aria-label=${label}>${icon(name)}</button>`;
  }
  render() {
    return html`
      <div class="group first">
        <i class="grip"></i>
        ${this.b("newchart", "New chart", "drop")}${this.b("profiles", "Profiles", "drop")}
        <i class="sep"></i>
        ${this.b("market", "Market watch")}${this.b("cross", "Data window")}${this.b("folder", "Navigator")}
        ${this.b("navigator", "Terminal", "on")}${this.b("tester", "Strategy tester")}
        <i class="sep"></i>
        <button class="b wide">${icon("order")}New Order</button>
        ${this.b("book", "MetaEditor")}
        <button class="b wide">${icon("auto")}AutoTrading</button>
      </div>
      <div class="group charts">
        <i class="grip"></i>
        ${this.b("bars", "Bar chart")}${this.b("candles", "Candlesticks", "on")}${this.b("line", "Line chart")}
        <i class="sep"></i>
        ${this.b("zoomin", "Zoom in")}${this.b("zoomout", "Zoom out")}${this.b("tile", "Tile windows")}
        <i class="sep"></i>
        ${this.b("scroll", "Auto scroll", "on")}${this.b("shift", "Chart shift", "on")}
        <i class="sep"></i>
        ${this.b("indicator", "Indicators", "drop")}${this.b("clock", "Periods", "drop")}${this.b("template", "Templates", "drop")}
      </div>
      <div class="group">
        <i class="grip"></i>
        ${["M5", "M15", "M30", "H1", "H4", "D1", "W1"].map((t) => html`<button class="b tf ${t === "M30" ? "on" : ""}">${t}</button>`)}
      </div>
      <div class="group">
        <i class="grip"></i><i class="sep gap"></i>
        ${this.b("vline", "Vertical line")}${this.b("hline", "Horizontal line")}${this.b("trend", "Trendline")}
        ${this.b("crossline", "Crosshair")}${this.b("rect", "Rectangle")}${this.b("channel", "Equidistant channel")}
      </div>
      <div class="find">
        <input type="text" aria-label="Search">${icon("search")}
        <button class="chat" aria-label="Messages"><span class="bubble">5</span></button>
      </div>`;
  }
}

const orders = [
  ["119300723", "2014.12.08 02:06:25", "sell", "1.00", "nzdjpy", "93.36", "93.34", "0.00", "92.56", "0.00", "0.00", "660.51"],
  ["119300742", "2014.12.08 02:16:52", "sell", "1.00", "cadjpy", "106.23", "106.22", "0.00", "105.92", "0.00", "0.00", "255.95"],
  ["119300747", "2014.12.08 02:09:54", "sell", "1.00", "usdjpy", "121.484", "121.476", "0.000", "121.118", "0.00", "0.00", "302.18"],
  ["119301421", "2014.12.08 10:23:50", "buy", "5.00", "gbpchf", "1.52579", "1.52405", "0.00000", "1.52836", "0.00", "0.00", "1 310.25"],
  ["119302378", "2014.12.08 10:49:09", "buy", "5.00", "gbpusd", "1.55671", "1.55394", "0.00000", "1.55834", "0.00", "0.00", "815.00"],
  ["119303081", "2014.12.08 11:09:13", "buy", "5.00", "audcad", "0.9485", "0.9458", "0.0000", "0.9479", "0.00", "0.00", "-262.36"],
];
const columns = ["Time", "Type", "Size", "Symbol", "Price", "S / L", "T / P", "Price", "Commission", "Swap", "Profit"];
const tabs = ["Exposure", "Account History", "News", "Alerts", "Mailbox", "Market", "Code Base", "Experts", "Journal"];

@customElement("terminal-panel")
class TerminalPanel extends LitElement {
  static styles = [base, css`
    :host { display: grid; grid-template-columns: 15px 1fr; padding: 3px 4px 2px 0; column-gap: 1px; background: #f0f0f0; font-size: 11px; color: #000; }
    .rail { display: flex; flex-direction: column; align-items: center; padding-left: 1px; }
    .x { height: 14px; width: 13px; display: grid; place-items: center; }
    .label { flex: 1; width: 13px; writing-mode: vertical-rl; transform: rotate(180deg); font: 12px/13px Roboto, "Noto Sans", sans-serif; color: #4c5560;
      background: linear-gradient(#b6c9dc, #d7e4f0); }
    .main { min-width: 0; border-top: 1px solid #a0a0a0; background: #fff; display: flex; flex-direction: column; }
    table { width: 100%; table-layout: fixed; border-collapse: separate; border-spacing: 0; }
    .c-order { width: 132px; } .c-time { width: 184px; } .c-type { width: 92px; } .c-size { width: 70px; } .c-num { width: 102px; }
    th { height: 24px; padding: 0 3px 0 0; font-weight: 400; text-align: right; background: linear-gradient(#fff 40%, #f1f3f6); border-right: 1px solid #e2e4e8; border-bottom: 1px solid #d5d5d5; }
    th:first-child { text-align: left; padding-left: 6px; }
    th:last-child { padding-right: 5px; }
    th:last-child, td:last-child { border-right: 0; }
    .sort { margin-left: 8px; color: #888; }
    td { height: 20px; padding: 0 1px 1px 0; line-height: 18px; text-align: right; border-top: 1px solid #c8c8c8; border-right: 1px solid #c8c8c8; overflow: hidden; white-space: nowrap; }
    td:first-child { text-align: left; padding-left: 2px; }
    .id { display: flex; align-items: center; gap: 2px; }
    .alt td { background: #ebebeb; }
    .sel td { background: #3399ff; color: #fff; border-top-color: #3399ff; }
    .profit { display: flex; justify-content: flex-end; align-items: center; gap: 5px; padding-right: 1px; }
    tfoot td { background: #c8c8c8; border: 0; font: bold 11px/20px Roboto, "Noto Sans", sans-serif; padding: 0 24px 0 0; }
    tfoot td:first-child { padding-right: 0; }
    .sum { display: flex; align-items: center; gap: 3px; white-space: pre; }
    .tabs { display: flex; align-items: flex-start; height: 21px; margin-top: 5px; background: #f0f0f0; border-top: 1px solid #000; color: #707070; padding-left: 2px; }
    .tabs button { font-family: Roboto, "Noto Sans", sans-serif; height: 12px; line-height: 12px; margin-top: 4px; padding: 0 8px 0 10px; border-right: 1px solid #555; }
    .tabs .cur { background: #fff; color: #000; border: solid #000; border-width: 0 2px 2px 1px; width: 49px; padding: 0; height: 19px; line-height: 17px; margin-top: -1px; font-family: inherit; }
  `];
  render() {
    return html`
      <div class="rail">
        <button class="x" aria-label="Close panel"><svg width="7" height="7" viewBox="0 0 7 7"><path d="M1 1l5 5M6 1l-5 5" stroke="#000" stroke-width="1.600"/></svg></button>
        <span class="label">Terminal</span>
      </div>
      <div class="main">
        <table>
          <colgroup><col class="c-order"><col class="c-time"><col class="c-type"><col class="c-size"><col class="c-type">
            ${[1, 2, 3, 4, 5, 6].map(() => html`<col class="c-num">`)}<col></colgroup>
          <thead><tr><th>Order<span class="sort">&nbsp;∕</span></th>${columns.map((c) => html`<th>${c}</th>`)}</tr></thead>
          <tbody>
            ${orders.map((row, i) => html`<tr class=${classMap({ sel: i === 1, alt: i === 3 || i === 5 })}>
              <td><span class="id">${icon(row[2])}${row[0]}</span></td>
              ${row.slice(1, -1).map((c) => html`<td>${c}</td>`)}
              <td><span class="profit">${row[11]}<button aria-label="Close order">${icon("cross8")}</button></span></td>
            </tr>`)}
          </tbody>
          <tfoot><tr>
            <td colspan="11"><span class="sum">${icon("balance")}Balance: 9 804.96 USD  Equity: 12 886.49  Margin: 2 233.41  Free margin: 10 653.08  Margin level: 576.99%</span></td>
            <td>3 081.53</td>
          </tr></tfoot>
        </table>
        <div class="tabs" role="tablist">
          <button class="cur" role="tab" aria-selected="true">Trade</button>
          ${tabs.map((t) => html`<button role="tab">${t}</button>`)}
        </div>
      </div>`;
  }
}

@customElement("app-root")
class AppRoot extends LitElement {
  static styles = [base, css`
    :host { display: flex; flex-direction: column; height: 100vh; overflow: hidden; background: #f0f0f0; color: #000; font: 11px "Noto Sans", "Open Sans", sans-serif; }
    .title { flex: none; height: 22px; display: flex; align-items: center; gap: 7px; padding: 0 2px; border-top: 1px solid #2b2f36;
      background: linear-gradient(#99b4d1, #b9d1ea); font: 12px Roboto, "Noto Sans", sans-serif; }
    .title span { flex: 1; }
    .menu { flex: none; height: 20px; display: flex; gap: 17px; padding-left: 7px; background: #f0f0f0; font: 11px Roboto, "Noto Sans", sans-serif; }
    .work { flex: 1; min-height: 0; display: grid; grid-template: minmax(0, 1fr) / 605fr 759fr; padding: 1px 0 0 2px; background: #7c7f84; border-bottom: 2px solid #f0f0f0; }
    .pages { flex: none; height: 21px; display: flex; align-items: flex-start; border-top: 1px solid #000; padding-left: 3px; color: #707070; font: 11px Roboto, "Noto Sans", sans-serif; }
    .pages .cur { width: 85px; height: 19px; background: #fff; color: #000; border: solid #000; border-width: 0 1px 2px 2px; margin-top: -1px; }
    .pages .rest { height: 12px; line-height: 12px; margin-top: 3px; padding: 0 10px 0 9px; border-right: 1px solid #555; }
    .nav { margin-left: auto; display: flex; gap: 13px; padding: 6px 6px 0 0; }
    .status { flex: none; height: 23px; display: grid; grid-template-columns: 1fr 116px 102px 71px 71px 68px 70px 66px 162px; align-items: center; padding: 2px 0 0 2px;
      border-top: 1px solid #a0a0a0; border-bottom: 1px solid #3a4450; box-shadow: inset 0 1px #fff; }
    .cell { height: 16px; line-height: 15px; border-left: 1px solid #a0a0a0; padding-left: 5px; }
    .net { display: flex; gap: 38px; align-items: center; }
    .task { flex: none; height: 39px; display: flex; justify-content: flex-end; background: #fff; border-left: 6px solid #eaf1f9; }
    .tray { width: 327px; display: flex; align-items: center; background: linear-gradient(90deg, #a6c0dc 45px, #8294ab 85px); color: #fff; gap: 8px; padding-left: 86px; border-top: 1px solid #b3c4d8; font-size: 12px; }
    .lang { margin-right: 8px; font-family: Roboto, "Noto Sans", sans-serif; }
    .up { width: 8px; border: 4px solid transparent; border-bottom-color: #fff; border-top: 0; margin-right: 4px; }
    .clock { flex: 1; text-align: center; line-height: 17px; font-family: Roboto, "Noto Sans", sans-serif; }
    .show { width: 14px; height: 38px; border: 1px solid #4f6178; background: linear-gradient(135deg, #9dabbd, #44546a 60%, #8a9ab0); }
  `];
  render() {
    const m30 = [
      { plot: pricePlot, axis: priceAxis, size: "price" },
      { plot: trixPlot, axis: trixAxis, size: "trix" },
      { plot: a1Plot, axis: a1Axis, size: "fill" },
    ];
    const m15 = [
      { plot: m15Price, axis: m15PriceAxis, size: "strip" },
      { plot: strengthPlot, axis: strengthAxis, size: "fill" },
    ];
    return html`
      <header class="title">${icon("logo")}<span>6479229: FxPro.com-Demo01 - Demo Account - GBPCHF,M30</span>
        <caption-buttons active restore></caption-buttons></header>
      <nav class="menu">${["File", "View", "Insert", "Charts", "Tools", "Window", "Help"].map((m) => html`<button>${m}</button>`)}</nav>
      <tool-bar></tool-bar>
      <main class="work">
        <chart-window name="GBPCHF,M30" active .panels=${m30}></chart-window>
        <chart-window name="GBPCHF,M15" .panels=${m15}></chart-window>
      </main>
      <div class="pages" role="tablist">
        <button class="cur" role="tab" aria-selected="true">GBPCHF,M30</button>
        <button class="rest" role="tab">GBPCHF,M15</button>
        <span class="nav">
          <svg width="4" height="7" viewBox="0 0 4 7"><path d="M4 0v7L0 3.500z" fill="#808080"/></svg>
          <svg width="4" height="7" viewBox="0 0 4 7"><path d="M0 0v7l4-3.500z" fill="#808080"/></svg>
        </span>
      </div>
      <terminal-panel></terminal-panel>
      <footer class="status">
        <span>For Help, press F1</span><span class="cell">GBPCHF</span>
        ${[1, 2, 3, 4, 5, 6].map(() => html`<span class="cell"></span>`)}
        <span class="cell net">
          <svg width="24" height="13" viewBox="0 0 24 13">
            ${[0, 1, 2, 3, 4, 5, 6, 7].map((i) => svg`<path d="M${i * 3} 0h2v${10 - i}h-2z" fill="#5f7a0a"/><path d="M${i * 3} ${11 - i}h2V13h-2z" fill="#0c3c5c"/>`)}
          </svg>2834/17 kb</span>
      </footer>
      <div class="task">
        <div class="tray">
          <span class="lang">ES</span><i class="up"></i>
          ${icon("signal")}${icon("flag")}${icon("plug")}${icon("speaker")}
          <span class="clock">6:39<br>08/12/2014</span>
          <button class="show" aria-label="Show desktop"></button>
        </div>
      </div>`;
  }
}
